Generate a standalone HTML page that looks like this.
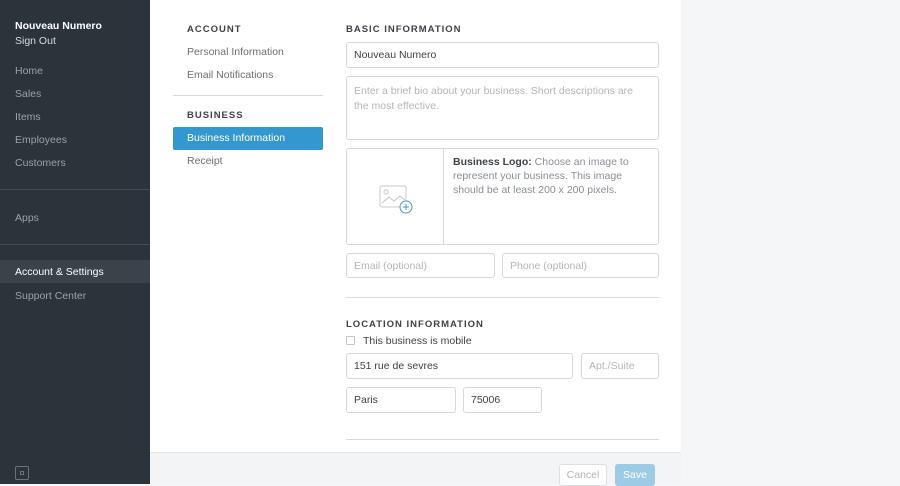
<!DOCTYPE html>
<html><head><style>
*{box-sizing:border-box;margin:0;padding:0}
body{width:900px;height:484px;overflow:hidden;font-family:"Liberation Sans",sans-serif;background:#f5f6f7;position:relative}
.a{position:absolute}
#side{left:0;top:0;width:150px;height:484px;background:#2b333b}
#side div{position:absolute;left:15px;font-size:10.5px;color:#9ba2a8}
#main{left:150px;top:0;width:531px;height:484px;background:#fff}
.hd{font-size:9.5px;font-weight:bold;letter-spacing:1px;color:#3d4247}
.nv{font-size:10.5px;color:#6a6f74}
.in{position:absolute;border:1px solid #d6d8da;border-radius:3px;font-size:10.5px;color:#3d4247;padding-left:7px;display:flex;align-items:center;background:#fff}
.ph{color:#b2b6ba}
.ln{position:absolute;height:1px;background:#d8dadc}
</style></head><body>
<div id="side" class="a">
<div style="top:20px;color:#fff;font-weight:bold">Nouveau Numero</div>
<div style="top:35px;color:#d8dbde">Sign Out</div>
<div style="top:65px">Home</div>
<div style="top:88px">Sales</div>
<div style="top:111px">Items</div>
<div style="top:134px">Employees</div>
<div style="top:157px">Customers</div>
<div style="top:189px;left:0;width:150px;height:1px;background:#434b53"></div>
<div style="top:212px">Apps</div>
<div style="top:244px;left:0;width:150px;height:1px;background:#434b53"></div>
<div style="top:260px;left:0;width:150px;height:23px;background:#3a424a"></div>
<div style="top:266px;color:#fff">Account &amp; Settings</div>
<div style="top:290px">Support Center</div>
<div style="top:466px;width:14px;height:14px;border:1.5px solid #6b737a;border-radius:2px"><span style="position:absolute;left:3.5px;top:3.5px;width:4px;height:4px;border:1px solid #6b737a"></span></div>
</div>
<div id="main" class="a">
<div class="a hd" style="left:37px;top:24px">ACCOUNT</div>
<div class="a nv" style="left:37px;top:46px">Personal Information</div>
<div class="a nv" style="left:37px;top:69px">Email Notifications</div>
<div class="ln" style="left:23px;top:95px;width:150px"></div>
<div class="a hd" style="left:37px;top:110px">BUSINESS</div>
<div class="a" style="left:23px;top:127px;width:150px;height:23px;background:#3498d0;border-radius:2px;color:#fff;font-size:10.5px;padding:5px 14px">Business Information</div>
<div class="a nv" style="left:37px;top:155px">Receipt</div>
<div class="a hd" style="left:196px;top:24px">BASIC INFORMATION</div>
<div class="in" style="left:196px;top:42px;width:313px;height:26px">Nouveau Numero</div>
<div class="in ph" style="left:196px;top:76px;width:313px;height:64px;align-items:flex-start;padding-top:7px;line-height:15px;padding-right:12px">Enter a brief bio about your business. Short descriptions are the most effective.</div>
<div class="in" style="left:196px;top:148px;width:313px;height:97px;padding:0">
<div style="position:absolute;left:96px;top:0;width:1px;height:95px;background:#d6d8da"></div>
<svg style="position:absolute;left:32px;top:36px" width="36" height="30" viewBox="0 0 36 30"><rect x="1" y="1" width="26" height="21" rx="2" fill="none" stroke="#c4c8cc"/><circle cx="7" cy="7" r="2" fill="none" stroke="#c4c8cc"/><path d="M3 18l7-6 5 4 6-5 5 4" fill="none" stroke="#c4c8cc"/><circle cx="27" cy="22" r="6" fill="#fff" stroke="#4a9ac7"/><path d="M27 19v6M24 22h6" stroke="#4a9ac7"/></svg>
<div style="position:absolute;left:106px;top:6px;width:202px;line-height:14px;color:#8a8f94;font-size:10.5px">
<b style="color:#3d4247">Business Logo:</b> Choose an image to represent your business. This image should be at least 200 x 200 pixels.</div>
</div>
<div class="in ph" style="left:196px;top:253px;width:149px;height:25px">Email (optional)</div>
<div class="in ph" style="left:352px;top:253px;width:157px;height:25px">Phone (optional)</div>
<div class="ln" style="left:196px;top:297px;width:313px"></div>
<div class="a hd" style="left:196px;top:319px">LOCATION INFORMATION</div>
<div class="a" style="left:196px;top:336px;width:9px;height:9px;border:1px solid #c4c8cc;border-radius:1px"></div>
<div class="a" style="left:213px;top:335px;font-size:10.5px;color:#3d4247">This business is mobile</div>
<div class="in" style="left:196px;top:353px;width:227px;height:26px">151 rue de sevres</div>
<div class="in ph" style="left:431px;top:353px;width:78px;height:26px">Apt./Suite</div>
<div class="in" style="left:196px;top:387px;width:110px;height:26px">Paris</div>
<div class="in" style="left:313px;top:387px;width:79px;height:26px">75006</div>
<div class="ln" style="left:196px;top:439px;width:313px"></div>
<div class="a" style="left:0;top:452px;width:531px;height:32px;background:#f2f4f5;border-top:1px solid #e4e6e8"></div>
<div class="a" style="left:409px;top:464px;width:48px;height:22px;border:1px solid #dde0e2;border-radius:3px;background:#fff;font-size:10.5px;color:#b2b6ba;text-align:center;line-height:20px">Cancel</div>
<div class="a" style="left:465px;top:464px;width:40px;height:22px;border-radius:3px;background:#9dcbe6;font-size:10.5px;color:#fff;text-align:center;line-height:22px">Save</div>
</div>
</body></html>
